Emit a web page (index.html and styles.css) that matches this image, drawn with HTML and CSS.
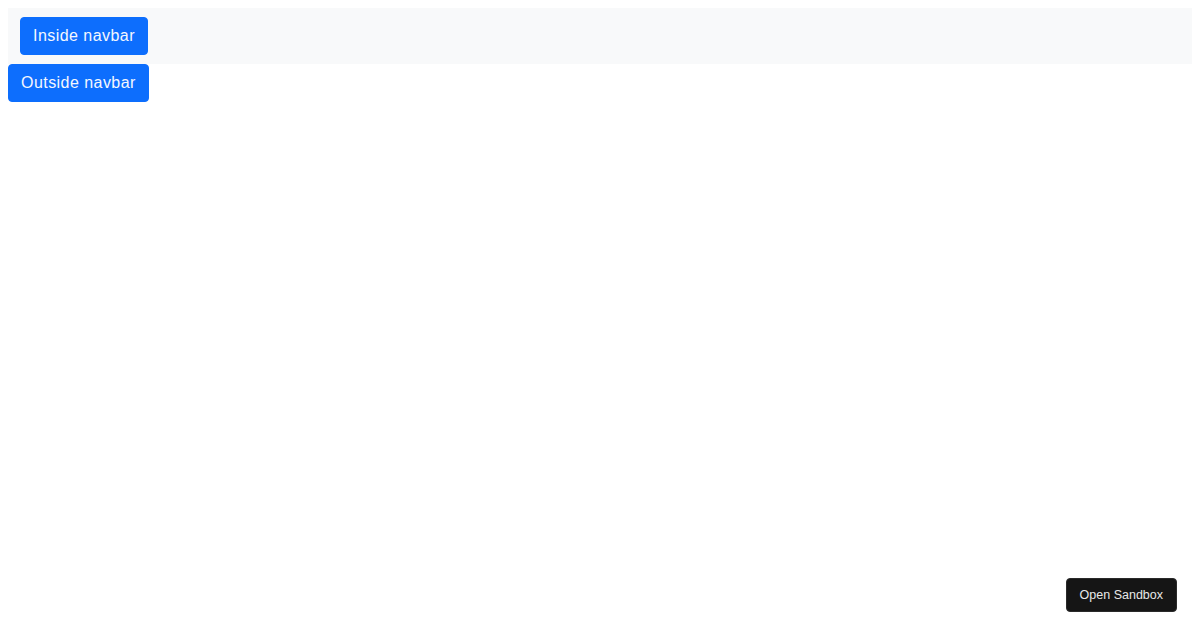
FILE: index.html
```html
<!DOCTYPE html>
<html lang="en">
<head>
<meta charset="UTF-8">
<meta name="viewport" content="width=device-width, initial-scale=1.0">
<title>Navbar</title>
<link rel="stylesheet" href="styles.css">
</head>
<body>
<nav class="navbar">
<div class="container-fluid">
<button type="button" class="btn btn-primary">Inside navbar</button>
</div>
</nav>
<button type="button" class="btn btn-primary">Outside navbar</button>

<a class="sandbox-link" href="#">Open Sandbox</a>
</body>
</html>
```

FILE: styles.css
```css
body {
margin: 8px;
font-family: "Liberation Sans", Arial, sans-serif;
font-size: 16px;
line-height: 1.5;
color: #212529;
background-color: #fff;
}
.navbar {
display: flex;
align-items: center;
padding: 9px 0;
background-color: #f8f9fa;
}
.container-fluid {
display: flex;
width: 100%;
padding: 0 12px;
}
.btn {
display: inline-block;
padding: 6px 12px;
font-family: inherit;
font-size: 16px;
line-height: 1.5;
letter-spacing: 0.45px;
border: 1px solid transparent;
border-radius: 4px;
cursor: pointer;
}
.btn-primary {
color: #f4f7ff;
background-color: #0d6efd;
border-color: #0d6efd;
}
.btn-primary:hover {
background-color: #0b5ed7;
}
.sandbox-link {
position: fixed;
right: 23px;
bottom: 18px;
display: flex;
align-items: center;
height: 34px;
box-sizing: border-box;
padding: 0 13px;
font-size: 12.5px;
color: #e8e8e8;
text-decoration: none;
background-color: #151515;
border: 1px solid #2a2a2a;
border-radius: 4px;
}
```
